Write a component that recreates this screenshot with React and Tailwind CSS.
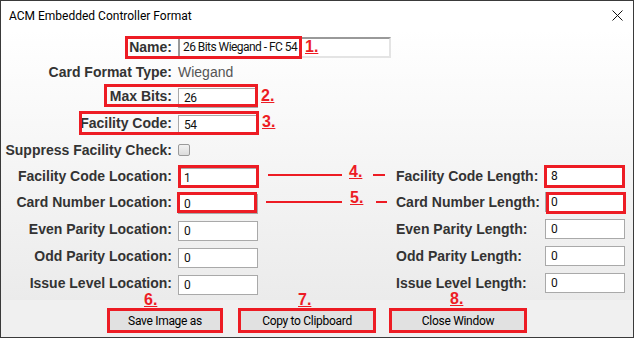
import React from 'react';

const label = 'font-["Liberation_Sans",Arial,sans-serif] text-[14px] font-bold text-[#333]';
const field =
  'h-[20px] bg-white border border-[#a9a9a9] pl-[5px] font-["Roboto",Arial,sans-serif] text-[12px] tracking-[-0.4px] text-[#111] outline-none';

// rows that hold a location on the left and a length on the right
const pairRows = [
  { left: 'Facility Code Location:', lv: '1', right: 'Facility Code Length:', rv: '8', mt: 'mt-[6px]' },
  { left: 'Card Number Location:', lv: '0', right: 'Card Number Length:', rv: '0', mt: 'mt-[6px]' },
  { left: 'Even Parity Location:', lv: '0', right: 'Even Parity Length:', rv: '0', mt: 'mt-[7px]' },
  { left: 'Odd Parity Location:', lv: '0', right: 'Odd Parity Length:', rv: '0', mt: 'mt-[7px]' },
  { left: 'Issue Level Location:', lv: '0', right: 'Issue Level Length:', rv: '0', mt: 'mt-[7px]' },
];

// annotation layer: red boxes, numbers and lines drawn over the dialog
const boxes = [
  'left-[124px] top-[35px] w-[177px] h-[23px]',
  'left-[103px] top-[83px] w-[154px] h-[23px]',
  'left-[78px] top-[110px] w-[180px] h-[24px]',
  'left-[177px] top-[164px] w-[81px] h-[23px]',
  'left-[176px] top-[191px] w-[80px] h-[21px]',
  'left-[543px] top-[164px] w-[81px] h-[23px]',
  'left-[545px] top-[191px] w-[80px] h-[22px]',
  'left-[106px] top-[307px] w-[116px] h-[25px]',
  'left-[237px] top-[307px] w-[138px] h-[25px]',
  'left-[388px] top-[307px] w-[138px] h-[25px]',
];

const numbers = [
  { n: '1.', pos: 'left-[304px] top-[37px]' },
  { n: '2.', pos: 'left-[260px] top-[86px]' },
  { n: '3.', pos: 'left-[261px] top-[112px]' },
  { n: '4.', pos: 'left-[348px] top-[162px]' },
  { n: '5.', pos: 'left-[349px] top-[188px]' },
  { n: '6.', pos: 'left-[143px] top-[290px]' },
  { n: '7.', pos: 'left-[297px] top-[290px]' },
  { n: '8.', pos: 'left-[449px] top-[289px]' },
];

const lines = [
  'left-[267px] top-[173px] w-[74px]',
  'left-[372px] top-[173px] w-[12px]',
  'left-[265px] top-[200px] w-[76px]',
  'left-[375px] top-[200px] w-[11px]',
];

function Field({ value, w = 'w-[80px]' }) {
  return <input readOnly value={value} className={`${field} ${w}`} />;
}

export default function App() {
  return (
    <div className="relative w-[634px] h-[338px] border border-[#3a3a3a] bg-white flex flex-col overflow-hidden">
      {/* Title bar */}
      <div className="h-[29px] flex items-center justify-between pl-[8px] pr-[10px] bg-white">
        <span className='font-["Roboto",sans-serif] text-[12px] text-black'>ACM Embedded Controller Format</span>
        <svg width="11" height="11" viewBox="0 0 11 11">
          <path d="M0.5 0.5 L10.5 10.5 M10.5 0.5 L0.5 10.5" stroke="#111" strokeWidth="1" />
        </svg>
      </div>

      {/* Form */}
      <div className="flex-1 bg-linear-to-b from-white to-[#ebebeb] pt-[7px] flex flex-col">
        <div className="flex items-center h-[20px]">
          <span className={`${label} w-[171px] text-right shrink-0`}>Name:</span>
          <input
            readOnly
            value="26 Bits Wiegand - FC 54"
            className='ml-[6px] w-[213px] h-[21px] bg-white border-2 border-t-[#999] border-l-[#999] border-r-[#e4e4e4] border-b-[#e4e4e4] pl-[3px] font-["Roboto",Arial,sans-serif] text-[12px] tracking-[-0.55px] text-[#111] outline-none'
          />
        </div>
        <div className="flex items-center h-[20px] mt-[5px]">
          <span className={`${label} w-[171px] text-right shrink-0`}>Card Format Type:</span>
          <span className='ml-[6px] font-["Liberation_Sans",Arial,sans-serif] text-[14px] text-[#555]'>Wiegand</span>
        </div>
        <div className="flex items-center h-[20px] mt-[4px]">
          <span className={`${label} w-[171px] text-right shrink-0`}>Max Bits:</span>
          <span className="ml-[6px]"><Field value="26" /></span>
        </div>
        <div className="flex items-center h-[20px] mt-[7px]">
          <span className={`${label} w-[171px] text-right shrink-0`}>Facility Code:</span>
          <span className="ml-[6px]"><Field value="54" /></span>
        </div>
        <div className="flex items-center h-[20px] mt-[7px]">
          <span className={`${label} w-[171px] text-right shrink-0`}>Suppress Facility Check:</span>
          <span className="ml-[6px] w-[12px] h-[12px] rounded-[2px] border border-[#9a9a9a] bg-linear-to-b from-[#f2f2f2] to-[#dcdcdc]" />
        </div>
        {pairRows.map((r) => (
          <div key={r.left} className={`flex items-center h-[20px] ${r.mt}`}>
            <span className={`${label} w-[171px] text-right shrink-0`}>{r.left}</span>
            <span className="ml-[6px]"><Field value={r.lv} /></span>
            <span className={`${label} ml-[138px] w-[149px] shrink-0`}>{r.right}</span>
            <Field value={r.rv} />
          </div>
        ))}
        <div className="h-[6px]" />
      </div>

      {/* Footer buttons */}
      <div className="h-[37px] bg-[#f0f0f0] flex items-start pt-[8px] pl-[106px] gap-[15px]">
        {['Save Image as', 'Copy to Clipboard', 'Close Window'].map((t, i) => (
          <button
            key={t}
            className={`h-[25px] ${i === 0 ? 'w-[116px]' : 'w-[138px]'} ${i === 2 ? '-ml-[2px]' : ''} bg-[#e1e1e1] border border-[#adadad] font-["Roboto",Arial,sans-serif] text-[12px] tracking-[-0.3px] text-black`}
          >
            {t}
          </button>
        ))}
      </div>

      {/* Annotations */}
      {boxes.map((b) => (
        <div key={b} className={`absolute ${b} border-[3px] border-[#ed1c24] pointer-events-none`} />
      ))}
      {lines.map((l) => (
        <div key={l} className={`absolute ${l} h-[2px] bg-[#ed1c24]`} />
      ))}
      {numbers.map((x) => (
        <span
          key={x.n}
          className={`absolute ${x.pos} font-["Liberation_Sans",Arial,sans-serif] text-[16px] leading-[18px] font-bold text-[#ed1c24] underline`}
        >
          {x.n}
        </span>
      ))}
    </div>
  );
}
